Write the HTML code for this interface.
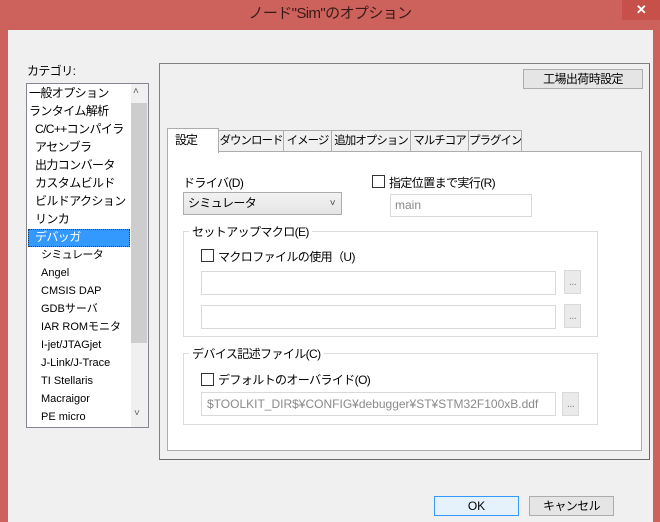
<!DOCTYPE html><html><head><meta charset="utf-8"><style>
*{box-sizing:border-box;margin:0;padding:0}
body{width:660px;height:522px;background:#cd615c;position:relative;overflow:hidden;font-family:"Liberation Sans","Noto Sans CJK JP",sans-serif;font-size:12px;color:#000;letter-spacing:-0.6px}
.a{position:absolute;white-space:nowrap}
.title{left:0;top:0;width:660px;height:30px;text-align:center;line-height:28px;font-size:15px;color:#3a1a18}
.close{left:622px;top:0;width:38px;height:20px;background:#c7504b;color:#fff;text-align:center;line-height:20px;font-size:13px;font-weight:bold}
.client{left:8px;top:30px;width:645px;height:492px;background:#f0f0f0}
.btn{background:#e5e5e5;border:1px solid #acacac;text-align:center;line-height:18px}
.cb{width:13px;height:13px;border:1px solid #333;background:#fff}
.inp{background:#fff;border:1px solid #d9d9d9;color:#888;padding-left:5px}
.dots{background:#eaeaea;border:1px solid #d9d9d9;color:#888;text-align:center;line-height:22px;font-size:11px}
.grp{border:1px solid #dcdcdc}
.gl{background:#fff;padding:0 3px}
.it{position:absolute;left:2px;height:18px;line-height:18px;white-space:nowrap}
.l{letter-spacing:0}
.tab{top:130px;height:21px;border:1px solid #acacac;border-bottom:none;background:#f0f0f0;text-align:center;line-height:20px;font-size:11.5px;letter-spacing:-1px;overflow:hidden}
</style></head><body>
<div class="a title">ノード"Sim"のオプション</div>
<div class="a close">✕</div>
<div class="a client"></div>
<div class="a" style="left:27px;top:62px">カテゴリ:</div>
<div class="a" style="left:26px;top:83px;width:123px;height:345px;background:#fff;border:1px solid #828790"></div>
<div class="a" style="left:131px;top:84px;width:17px;height:343px;background:#f0f0f0"></div>
<div class="a" style="left:131px;top:103px;width:16px;height:240px;background:#cdcdcd"></div>
<div class="a" style="left:133px;top:86px;font-size:10px;color:#606060">&#x2C4;</div>
<div class="a" style="left:134px;top:408px;font-size:10px;color:#606060">&#x2C5;</div>
<div class="a" style="left:28px;top:229px;width:102px;height:18px;background:#3399ff;border:1px dotted #333"></div>
<div class="a" style="left:27px;top:84px;width:104px;height:340px">
<div class="it" style="top:0">一般オプション</div>
<div class="it" style="top:18px">ランタイム解析</div>
<div class="it" style="top:36px;left:8px">C/C++コンパイラ</div>
<div class="it" style="top:54px;left:8px">アセンブラ</div>
<div class="it" style="top:72px;left:8px">出力コンバータ</div>
<div class="it" style="top:90px;left:8px">カスタムビルド</div>
<div class="it" style="top:108px;left:8px">ビルドアクション</div>
<div class="it" style="top:126px;left:8px">リンカ</div>
<div class="it" style="top:144px;left:8px;color:#fff">デバッガ</div>
<div class="it" style="top:162px;left:14px;font-size:11px">シミュレータ</div>
<div class="it l" style="top:180px;left:14px;font-size:11px">Angel</div>
<div class="it l" style="top:198px;left:14px;font-size:11px">CMSIS DAP</div>
<div class="it l" style="top:216px;left:14px;font-size:11px">GDBサーバ</div>
<div class="it l" style="top:234px;left:14px;font-size:11px">IAR ROMモニタ</div>
<div class="it l" style="top:252px;left:14px;font-size:11px">I-jet/JTAGjet</div>
<div class="it l" style="top:270px;left:14px;font-size:11px">J-Link/J-Trace</div>
<div class="it l" style="top:288px;left:14px;font-size:11px">TI Stellaris</div>
<div class="it l" style="top:306px;left:14px;font-size:11px">Macraigor</div>
<div class="it l" style="top:324px;left:14px;font-size:11px">PE micro</div>
</div>
<div class="a" style="left:159px;top:63px;width:491px;height:397px;border:1px solid #828282;border-right-color:#696969;border-bottom-color:#696969"></div>
<div class="a btn" style="left:523px;top:69px;width:120px;height:20px">工場出荷時設定</div>
<div class="a" style="left:167px;top:151px;width:475px;height:300px;background:#fff;border:1px solid #acacac"></div>
<div class="a tab" style="left:218px;width:66px">ダウンロード</div>
<div class="a tab" style="left:283px;width:49px">イメージ</div>
<div class="a tab" style="left:331px;width:80px">追加オプション</div>
<div class="a tab" style="left:410px;width:59px">マルチコア</div>
<div class="a tab" style="left:468px;width:54px">プラグイン</div>
<div class="a tab" style="left:167px;top:128px;width:52px;height:25px;background:#fff;line-height:22px;text-align:left;padding-left:7px;font-size:12px">設定</div>
<div class="a" style="left:183px;top:174px">ドライバ(D)</div>
<div class="a" style="left:183px;top:192px;width:159px;height:23px;border:1px solid #acacac;background:linear-gradient(#f2f2f2,#e5e5e5);padding-left:4px;line-height:21px">シミュレータ<span style="position:absolute;right:6px;top:0;font-size:10px;color:#444">&#x2C5;</span></div>
<div class="a cb" style="left:372px;top:175px"></div>
<div class="a" style="left:389px;top:174px">指定位置まで実行(R)</div>
<div class="a inp l" style="left:390px;top:194px;width:142px;height:23px;line-height:21px;padding-left:4px">main</div>
<div class="a grp" style="left:183px;top:231px;width:415px;height:106px"></div>
<div class="a gl" style="left:189px;top:223px">セットアップマクロ(E)</div>
<div class="a cb" style="left:201px;top:249px"></div>
<div class="a" style="left:218px;top:248px">マクロファイルの使用（U)</div>
<div class="a inp" style="left:201px;top:271px;width:355px;height:24px"></div>
<div class="a dots" style="left:564px;top:270px;width:17px;height:24px">...</div>
<div class="a inp" style="left:201px;top:305px;width:355px;height:24px"></div>
<div class="a dots" style="left:564px;top:304px;width:17px;height:24px">...</div>
<div class="a grp" style="left:183px;top:353px;width:415px;height:72px"></div>
<div class="a gl" style="left:189px;top:345px">デバイス記述ファイル(C)</div>
<div class="a cb" style="left:201px;top:373px"></div>
<div class="a" style="left:218px;top:371px">デフォルトのオーバライド(O)</div>
<div class="a inp" style="left:201px;top:392px;width:355px;height:24px;line-height:22px;color:#8a8a8a;letter-spacing:0">$TOOLKIT_DIR$¥CONFIG¥debugger¥ST¥STM32F100xB.ddf</div>
<div class="a dots" style="left:562px;top:392px;width:17px;height:24px">...</div>
<div class="a btn l" style="left:434px;top:496px;width:85px;height:20px;border-color:#3399ff;background:#e5f1fb">OK</div>
<div class="a btn" style="left:529px;top:496px;width:85px;height:20px">キャンセル</div>
</body></html>
